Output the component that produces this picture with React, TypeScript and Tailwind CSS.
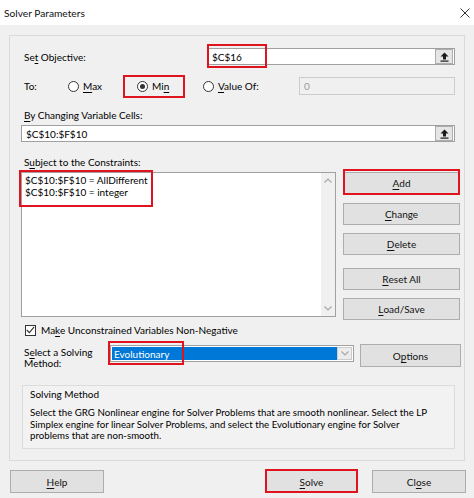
import React from "react";

function U({ children }: { children: React.ReactNode }) {
  return <span className="underline underline-offset-[2px]">{children}</span>;
}

function PickButton() {
  return (
    <div className="w-[18px] h-[15px] mr-[1px] border border-[#adadad] bg-[#e5e5e5] flex items-center justify-center">
      <svg width="9" height="10" viewBox="0 0 9 10">
        <path d="M4.5 0.5 L8.5 4.5 L6 4.5 L6 7.5 L3 7.5 L3 4.5 L0.5 4.5 Z" fill="#1a1a1a" />
        <rect x="0.5" y="8.5" width="8" height="1.2" fill="#1a1a1a" />
      </svg>
    </div>
  );
}

function Radio({ checked }: { checked?: boolean }) {
  return (
    <div className="w-[11px] h-[11px] rounded-full border border-[#333333] bg-white flex items-center justify-center">
      {checked && <div className="w-[5px] h-[5px] rounded-full bg-[#333333]" />}
    </div>
  );
}

function Btn({ children, className }: { children: React.ReactNode; className?: string }) {
  return (
    <div
      className={`h-[22px] border border-[#adadad] bg-[#e1e1e1] flex items-center justify-center text-[#111111] ${className ?? ""}`}
    >
      {children}
    </div>
  );
}

function Chevron({ up }: { up?: boolean }) {
  return (
    <svg width="8" height="5" viewBox="0 0 8 5">
      <path d={up ? "M0.5 4.5 L4 1 L7.5 4.5" : "M0.5 0.5 L4 4 L7.5 0.5"} stroke="#a6a6a6" strokeWidth="1.1" fill="none" />
    </svg>
  );
}

export default function App() {
  return (
    <div className="relative w-[474px] h-[498px] bg-[#f0f0f0] text-[10px] leading-[14px] text-black font-['Lato',sans-serif] overflow-hidden">
      {/* title bar */}
      <div className="h-[25px] bg-white flex items-center justify-between pl-[4px] pr-[3px]">
        <span className="text-[10.2px] text-[#111111]">Solver Parameters</span>
        <svg width="10" height="10" viewBox="0 0 10 10" className="mr-[1px]">
          <path d="M0.5 0.5 L9.5 9.5 M9.5 0.5 L0.5 9.5" stroke="#333333" strokeWidth="1" />
        </svg>
      </div>

      <div className="px-[9px] pt-[10px]">
        <div className="w-[456px] h-[426px] border border-[#dadada] pl-[11px] flex flex-col">
          {/* set objective */}
          <div className="mt-[12px] h-[17px] flex items-center">
            <div className="w-[186px] pl-[3px]">
              Se<U>t</U> Objective:
            </div>
            <div className="w-[248px] h-[17px] border border-[#a0a0a0] bg-white flex items-center">
              <span className="flex-1 pl-[4px]">$C$16</span>
              <PickButton />
            </div>
          </div>

          {/* to */}
          <div className="mt-[12px] h-[18px] flex items-center">
            <div className="w-[47px] pl-[3px]">To:</div>
            <div className="w-[69px] flex items-center gap-[4px]">
              <Radio />
              <span>
                <U>M</U>ax
              </span>
            </div>
            <div className="w-[66px] flex items-center gap-[4px]">
              <Radio checked />
              <span>
                Mi<U>n</U>
              </span>
            </div>
            <div className="w-[96px] flex items-center gap-[4px]">
              <Radio />
              <span>
                <U>V</U>alue Of:
              </span>
            </div>
            <div className="w-[156px] h-[18px] border border-[#cccccc] bg-[#f0f0f0] pl-[4px] flex items-center text-[#9a9a9a]">
              0
            </div>
          </div>

          {/* changing cells */}
          <div className="mt-[13px] h-[14px] pl-[3px]">
            <U>B</U>y Changing Variable Cells:
          </div>
          <div className="mt-[3px] w-[434px] h-[17px] border border-[#a0a0a0] bg-white flex items-center">
            <span className="flex-1 pl-[4px]">$C$10:$F$10</span>
            <PickButton />
          </div>

          {/* constraints */}
          <div className="mt-[13px] flex">
            <div className="w-[315px] flex flex-col">
              <div className="h-[14px] pl-[3px]">
                S<U>u</U>bject to the Constraints:
              </div>
              <div className="mt-[3px] h-[145px] border border-[#a0a0a0] bg-white flex">
                <div className="flex-1 pl-[3px] pt-[2px] leading-[11.5px]">
                  <div>$C$10:$F$10 = AllDifferent</div>
                  <div>$C$10:$F$10 = integer</div>
                </div>
                <div className="w-[14px] bg-[#f0f0f0] flex flex-col items-center justify-between py-[5px]">
                  <Chevron up />
                  <Chevron />
                </div>
              </div>
            </div>
            <div className="ml-[7px] w-[117px] pt-[17px] flex flex-col">
              <Btn>
                <U>A</U>dd
              </Btn>
              <Btn className="mt-[9px]">
                <U>C</U>hange
              </Btn>
              <Btn className="mt-[8px]">
                <U>D</U>elete
              </Btn>
              <Btn className="mt-[13px]">
                <U>R</U>eset All
              </Btn>
              <Btn className="mt-[8px]">
                <U>L</U>oad/Save
              </Btn>
            </div>
          </div>

          {/* non-negative */}
          <div className="mt-[3px] h-[14px] pl-[4px] flex items-center gap-[5px]">
            <div className="w-[11px] h-[11px] border border-[#333333] bg-white flex items-center justify-center">
              <svg width="9" height="8" viewBox="0 0 9 8">
                <path d="M0.8 4 L3.3 6.6 L8.2 0.8" stroke="#333333" strokeWidth="1.1" fill="none" />
              </svg>
            </div>
            <span>
              Ma<U>k</U>e Unconstrained Variables Non-Negative
            </span>
          </div>

          {/* solving method select */}
          <div className="mt-[7px] h-[23px] flex items-start">
            <div className="w-[89px] pl-[3px] mt-[3px] leading-[11px]">
              S<U>e</U>lect a Solving
              <br />
              Method:
            </div>
            <div className="mt-[1px] w-[244px] h-[17px] border border-[#a0a0a0] bg-white flex items-stretch p-[1px]">
              <div className="flex-1 bg-[#0078d7] text-white pl-[2px] flex items-center">Evolutionary</div>
              <div className="w-[15px] border border-[#cccccc] bg-[#ececec] flex items-center justify-center">
                <Chevron />
              </div>
            </div>
            <Btn className="ml-[6px] w-[101px] h-[23px]">
              O<U>p</U>tions
            </Btn>
          </div>

          {/* description */}
          <div className="mt-[18px] ml-[1px] w-[433px] h-[64px] border border-[#dcdcdc] bg-[#f2f2f2] pl-[7px] pt-[1px]">
            <div>Solving Method</div>
            <div className="mt-[6px] text-[9.7px] leading-[11.5px] whitespace-nowrap">
              Select the GRG Nonlinear engine for Solver Problems that are smooth nonlinear. Select the LP
              <br />
              Simplex engine for linear Solver Problems, and select the Evolutionary engine for Solver
              <br />
              problems that are non-smooth.
            </div>
          </div>
        </div>
      </div>

      {/* bottom buttons */}
      <div className="mt-[9px] flex">
        <Btn className="ml-[10px] w-[94px] h-[23px]">
          <U>H</U>elp
        </Btn>
        <Btn className="ml-[161px] w-[93px] h-[23px]">
          <U>S</U>olve
        </Btn>
        <Btn className="ml-[14px] w-[94px] h-[23px]">
          Cl<U>o</U>se
        </Btn>
      </div>

      {/* red annotation boxes */}
      <div className="absolute left-[207px] top-[44px] w-[60px] h-[24px] border-2 border-[#e0141e]" />
      <div className="absolute left-[123px] top-[75px] w-[62px] h-[23px] border-2 border-[#e0141e]" />
      <div className="absolute left-[19px] top-[170px] w-[134px] h-[37px] border-2 border-[#e0141e]" />
      <div className="absolute left-[343px] top-[169px] w-[117px] h-[26px] border-2 border-[#e0141e]" />
      <div className="absolute left-[108px] top-[341px] w-[76px] h-[24px] border-2 border-[#e0141e]" />
      <div className="absolute left-[265px] top-[469px] w-[93px] h-[24px] border-2 border-[#e0141e]" />
    </div>
  );
}
